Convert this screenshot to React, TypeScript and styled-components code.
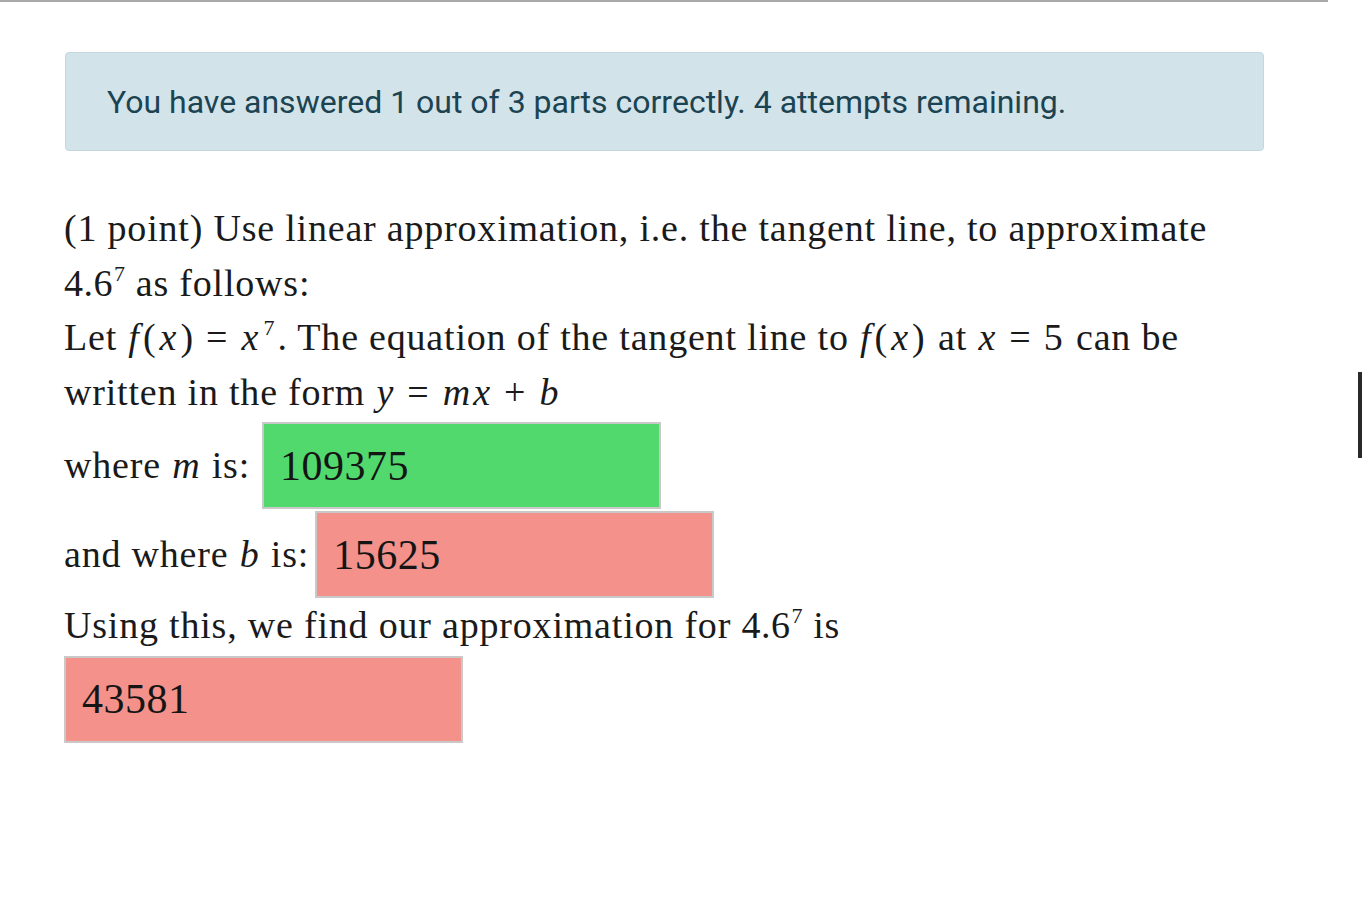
import React from 'react'
import styled, { createGlobalStyle } from 'styled-components'

const GlobalStyle = createGlobalStyle`
  html, body {
    margin: 0;
    padding: 0;
    background: #fff;
  }
  body {
    font-family: 'Liberation Serif', 'Times New Roman', serif;
    color: #1a1a1a;
  }
`

const Page = styled.div`
  width: 1363px;
  min-height: 923px;
  position: relative;
`

const TopRule = styled.div`
  width: 1328px;
  height: 2px;
  background: #a9a9a9;
`

const Content = styled.div`
  width: 1200px;
  padding: 50px 0 0 64px;
`

const Alert = styled.div`
  box-sizing: border-box;
  height: 99px;
  margin-left: 1px;
  padding: 0 41px;
  display: flex;
  align-items: center;
  background: #d2e3ea;
  border: 1px solid #c2d7df;
  border-radius: 4px;
  font-family: Roboto, 'Liberation Sans', sans-serif;
  font-size: 32px;
  color: #1c4351;
`

const Problem = styled.div`
  margin-top: 50px;
  font-size: 38px;
  letter-spacing: 0.8px;
  line-height: 54.5px;
`

const Para = styled.p`
  margin: 0;
`

const Math = styled.span`
  font-family: 'Liberation Serif', serif;
  letter-spacing: 3px;
`

const Num = styled.span`
  font-family: 'Liberation Serif', serif;
  letter-spacing: 0.5px;
`

const V = styled.i`
  font-style: italic;
  padding: 0 1px;
`

const Op = styled.span`
  padding: 0 10px;
`

const Sup = styled.sup`
  font-size: 22px;
  line-height: 0;
  vertical-align: 15px;
  margin-left: 1px;
`

const AnswerRow = styled.div<{ $gap: number }>`
  display: flex;
  align-items: center;
  margin-top: ${p => p.$gap}px;
`

const Label = styled.span<{ $space: number }>`
  margin-right: ${p => p.$space}px;
  white-space: pre;
`

const Answer = styled.input<{ $ok: boolean }>`
  box-sizing: border-box;
  width: 399px;
  height: 87px;
  margin: 0;
  padding: 0 0 0 16px;
  border: 2px solid #c9c9c9;
  border-radius: 0;
  outline: none;
  background: ${p => (p.$ok ? '#52d96d' : '#f3918a')};
  font-family: 'Liberation Serif', serif;
  font-size: 42px;
  letter-spacing: 0.5px;
  color: #151515;
`

const ScrollThumb = styled.div`
  position: absolute;
  right: 1px;
  top: 372px;
  width: 4px;
  height: 86px;
  background: #2a2a2a;
`

export default function App() {
  return (
    <Page>
      <GlobalStyle />
      <TopRule />
      <Content>
        <Alert>You have answered 1 out of 3 parts correctly. 4 attempts remaining.</Alert>
        <Problem>
          <Para>
            (1 point) Use linear approximation, i.e. the tangent line, to approximate
            <br />
            <Num>4.6<Sup>7</Sup></Num> as follows:
          </Para>
          <Para>
            Let <Math><V>f</V>(<V>x</V>)<Op>=</Op><V>x</V><Sup>7</Sup></Math>. The equation of the
            tangent line to <Math><V>f</V>(<V>x</V>)</Math> at <Math><V>x</V><Op>=</Op>5</Math> can be
            <br />
            written in the form <Math><V>y</V><Op>=</Op><V>mx</V><Op>+</Op><V>b</V></Math>
          </Para>
          <AnswerRow $gap={3}>
            <Label $space={12}>where <V>m</V> is:</Label>
            <Answer $ok readOnly value="109375" />
          </AnswerRow>
          <AnswerRow $gap={2}>
            <Label $space={6}>and where <V>b</V> is:</Label>
            <Answer $ok={false} readOnly value="15625" />
          </AnswerRow>
          <Para>
            Using this, we find our approximation for <Num>4.6<Sup>7</Sup></Num> is
          </Para>
          <AnswerRow $gap={3}>
            <Answer $ok={false} readOnly value="43581" />
          </AnswerRow>
        </Problem>
      </Content>
      <ScrollThumb />
    </Page>
  )
}
